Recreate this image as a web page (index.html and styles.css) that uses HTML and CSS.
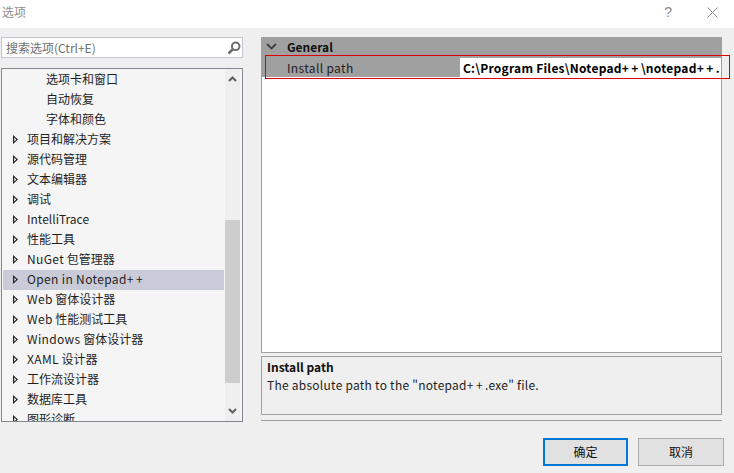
FILE: index.html
```html
<!DOCTYPE html>
<html lang="zh-CN">
<head>
<meta charset="utf-8">
<title>选项</title>
<link rel="stylesheet" href="styles.css">
</head>
<body>
<div class="dialog">
  <header class="titlebar">
    <span class="title">选项</span>
    <span class="help">?</span>
    <svg class="close" width="11" height="11" viewBox="0 0 11 11"><path d="M.5.5l10 10M10.500.5l-10 10" stroke="#8a8a8a" fill="none"/></svg>
  </header>
  <main class="content">
    <aside class="left">
      <div class="search">
        <span class="search-text">搜索选项(Ctrl+E)</span>
        <svg class="search-icon" width="14" height="14" viewBox="0 0 14 14"><circle cx="8.700" cy="5.300" r="3.800" fill="none" stroke="#6d6d6d" stroke-width="2"/><path d="M6 8l-4.500 4.500" stroke="#6d6d6d" stroke-width="2.600"/></svg>
      </div>
      <div class="tree">
        <ul class="rows">
          <li class="row child">选项卡和窗口</li>
          <li class="row child">自动恢复</li>
          <li class="row child">字体和颜色</li>
          <li class="row"><i class="arrow"></i>项目和解决方案</li>
          <li class="row"><i class="arrow"></i>源代码管理</li>
          <li class="row"><i class="arrow"></i>文本编辑器</li>
          <li class="row"><i class="arrow"></i>调试</li>
          <li class="row"><i class="arrow"></i>IntelliTrace</li>
          <li class="row"><i class="arrow"></i>性能工具</li>
          <li class="row"><i class="arrow"></i><span class="lat">NuGet</span> 包管理器</li>
          <li class="row selected"><i class="arrow"></i><span class="lat">Open in Notepad</span><span class="pp">++</span></li>
          <li class="row"><i class="arrow"></i><span class="lat">Web</span> 窗体设计器</li>
          <li class="row"><i class="arrow"></i><span class="lat">Web</span> 性能测试工具</li>
          <li class="row"><i class="arrow"></i><span class="lat">Windows</span> 窗体设计器</li>
          <li class="row"><i class="arrow"></i><span class="lat">XAML</span> 设计器</li>
          <li class="row"><i class="arrow"></i>工作流设计器</li>
          <li class="row"><i class="arrow"></i>数据库工具</li>
          <li class="row"><i class="arrow"></i>图形诊断</li>
        </ul>
        <div class="scrollbar">
          <svg class="chev" width="9" height="6" viewBox="0 0 9 6"><path d="M1 5l3.500-3.500L8 5" fill="none" stroke="#606060" stroke-width="2"/></svg>
          <div class="thumb"></div>
          <svg class="chev chev-down" width="9" height="6" viewBox="0 0 9 6"><path d="M1 1l3.500 3.500L8 1" fill="none" stroke="#606060" stroke-width="2"/></svg>
        </div>
      </div>
    </aside>
    <section class="right">
      <div class="grid">
        <div class="group">
          <svg class="group-chev" width="11" height="7" viewBox="0 0 11 7"><path d="M1 1l4.500 4.500L10 1" fill="none" stroke="#404040" stroke-width="1.800"/></svg>
          <span>General</span>
        </div>
        <div class="prop">
          <span class="prop-name">Install path</span>
          <span class="prop-value">C:\Program Files\Notepad<span class="pp">++</span>\notepad<span class="pp">++</span>.</span>
        </div>
        <div class="highlight"></div>
      </div>
      <div class="desc">
        <div class="desc-title">Install path</div>
        <div class="desc-text">The absolute path to the "notepad<span class="pp">++</span>.exe" file.</div>
      </div>
      <div class="sep"></div>
    </section>
  </main>
  <footer class="buttons">
    <button class="btn primary">确定</button>
    <button class="btn">取消</button>
  </footer>
</div>
</body>
</html>
```

FILE: styles.css
```css
* { box-sizing: border-box; }
html, body { margin: 0; height: 100%; }
body {
  background: #efefef;
  color: #1e1e1e;
  font: 12px/20px "Noto Sans CJK SC", "Noto Sans", sans-serif;
  overflow: hidden;
}
.dialog { display: flex; flex-direction: column; height: 473px; width: 734px; }
.titlebar {
  height: 28px;
  background: #fff;
  display: flex;
  align-items: center;
  padding: 0 16px 4px 2px;
  flex: none;
}
.title { flex: 1; color: #8f8f8f; font-size: 12px; }
.help { color: #8a8a8a; font: 14px/20px "Liberation Sans", sans-serif; margin-right: 35px; }
.close { display: block; }
.content { display: flex; padding: 9px 12px 0 1px; height: 384px; flex: none; }
.left { width: 242px; flex: none; margin-right: 18px; }
.search {
  height: 21px;
  background: #fff;
  border: 1px solid #c5c5d2;
  display: flex;
  align-items: center;
  justify-content: space-between;
  padding: 0 1px 0 4px;
  color: #6f6f6f;
}
.search-icon { display: block; }
.tree {
  margin-top: 10px;
  height: 354px;
  border: 1px solid #828790;
  background: #f5f5f5;
  display: flex;
  overflow: hidden;
}
.rows { list-style: none; margin: 0; padding: 1px 0 0 1px; width: 222px; flex: none; overflow: hidden; }
.row { height: 20px; line-height: 18px; padding-left: 24px; position: relative; white-space: nowrap; }
.row.child { padding-left: 43px; }
.row.selected { background: #cacbd9; }
.lat { letter-spacing: .35px; }
.pp { letter-spacing: 2.500px; }
.arrow {
  position: absolute;
  left: 10px;
  top: 5px;
  width: 5px;
  height: 9px;
  background: #222;
  clip-path: polygon(evenodd, 0 0, 5px 4.500px, 0 9px, 0 0, 1.200px 2.500px, 1.200px 6.500px, 3.300px 4.500px, 1.200px 2.500px);
}
.scrollbar {
  width: 15px;
  margin-left: 1px;
  flex: none;
  background: #efefef;
  display: flex;
  flex-direction: column;
  align-items: center;
}
.chev { display: block; margin-top: 7px; flex: none; }
.thumb { background: #cdcdcd; width: 15px; margin-top: 138px; height: 163px; flex: none; }
.chev-down { margin-top: 25px; }
.right { width: 461px; flex: none; }
.grid {
  height: 316px;
  background: #fff;
  border: 1px solid #a0a0a0;
  border-top: 0;
  position: relative;
}
.group {
  height: 19px;
  background: #a0a0a0;
  color: #111;
  font-weight: 700;
  display: flex;
  align-items: center;
  line-height: 21px;
}
.group-chev { margin: 0 10px 0 4px; }
.prop { height: 21px; background: #a0a0a0; display: flex; align-items: flex-end; }
.prop-name { width: 198px; height: 19px; line-height: 19px; flex: none; padding-left: 25px; letter-spacing: .35px; color: #222; }
.prop-value {
  background: #fff;
  color: #000;
  font-weight: 700;
  height: 19px;
  line-height: 19px;
  padding-left: 3px;
  flex: 1;
  min-width: 0;
  overflow: hidden;
  white-space: nowrap;
  letter-spacing: .25px;
}
.highlight {
  position: absolute;
  left: 3px;
  top: 18px;
  width: 465px;
  height: 24px;
  border: 1px solid #e00000;
}
.desc {
  margin-top: 3px;
  height: 59px;
  border: 1px solid #a0a0a0;
  padding: 1px 5px;
  line-height: 18px;
}
.desc-title { font-weight: 700; color: #111; }
.desc-text { color: #1e1e1e; letter-spacing: .25px; }
.sep { margin-top: 5px; height: 1px; background: #a0a0a0; }
.buttons { display: flex; justify-content: flex-end; gap: 10px; padding: 26px 10px 0 0; }
.btn {
  width: 86px;
  height: 28px;
  background: #e1e1e1;
  border: 1px solid #adadad;
  font: 12px/20px "Noto Sans CJK SC", sans-serif;
  color: #111;
  padding: 0;
}
.btn.primary { width: 85px; border: 2px solid #0078d7; }
```
